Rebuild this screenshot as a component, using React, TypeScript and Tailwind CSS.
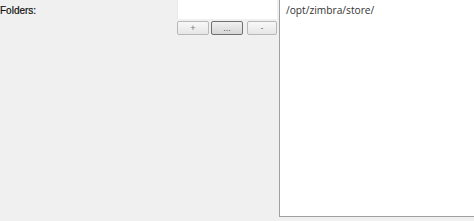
import React from "react";

export default function App() {
  return (
    <div className="w-[474px] h-[221px] flex bg-[#f0f0f0] overflow-hidden" style={{ fontFamily: '"Liberation Sans", Tahoma, sans-serif' }}>
      <div className="w-[278px] h-full flex bg-[#f0f0f0]">
        <div className="w-[177px] pt-[4px] text-[10px] leading-[13px] text-[#111]" style={{ fontFamily: '"Liberation Sans", Tahoma, sans-serif', WebkitTextStroke: "0.2px #111" }}>
          Folders:
        </div>
        <div className="flex flex-col w-[100px]">
          <div className="h-[19px] bg-white border-l border-[#e8e8e8]" />
          <div className="flex mt-[2px] h-[14px]">
            <button className="w-[32px] h-[14px] border border-[#b8b8b8] rounded-[2px] bg-gradient-to-b from-[#f8f8f8] to-[#e6e6e6] text-[9px] leading-[10px] text-[#777] flex items-center justify-center">+</button>
            <button className="ml-[2px] w-[32px] h-[14px] border border-[#707070] rounded-[2px] bg-gradient-to-b from-[#f0f0f0] to-[#d6d6d6] text-[9px] leading-[6px] text-[#555] flex items-center justify-center">...</button>
            <button className="ml-[4px] w-[30px] h-[14px] border border-[#b8b8b8] rounded-[2px] bg-gradient-to-b from-[#f8f8f8] to-[#e6e6e6] text-[9px] leading-[10px] text-[#777] flex items-center justify-center">-</button>
          </div>
        </div>
      </div>
      <div className="flex-1 flex flex-col">
        <div className="ml-[1px] h-[217px] bg-white border-l border-b border-[#a0a0a0] pl-[6px] pt-[4px] leading-[13px] text-[#333]" style={{ fontFamily: '"Open Sans", "Noto Sans", sans-serif', fontSize: "10.2px" }}>
          /opt/zimbra/store/
        </div>
      </div>
    </div>
  );
}
